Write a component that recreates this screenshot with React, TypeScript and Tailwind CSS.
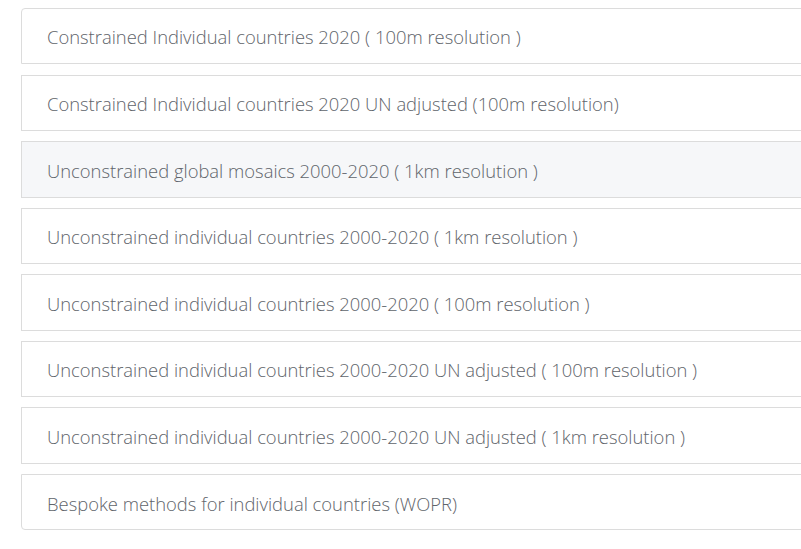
import React from "react";

const items = [
  "Constrained Individual countries 2020 ( 100m resolution )",
  "Constrained Individual countries 2020 UN adjusted (100m resolution)",
  "Unconstrained global mosaics 2000-2020 ( 1km resolution )",
  "Unconstrained individual countries 2000-2020 ( 1km resolution )",
  "Unconstrained individual countries 2000-2020 ( 100m resolution )",
  "Unconstrained individual countries 2000-2020 UN adjusted ( 100m resolution )",
  "Unconstrained individual countries 2000-2020 UN adjusted ( 1km resolution )",
  "Bespoke methods for individual countries (WOPR)",
];

export default function App() {
  return (
    <div className="w-[801px] h-[549px] overflow-hidden bg-white pt-[8px] pl-[21px]" style={{ fontFamily: '"Open Sans", "Noto Sans", sans-serif' }}>
      <div className="flex flex-col gap-[10.2px] w-[820px]">
        {items.map((t, i) => (
          <div
            key={i}
            className={`h-[56.4px] flex items-center pl-[25px] border border-[#dcdcdc] text-[18.4px] font-light text-[#5f656b] ${i === 2 ? "bg-[#f6f7f9]" : "bg-white"} ${i === 0 ? "rounded-t-[4px]" : ""} ${i === items.length - 1 ? "rounded-b-[4px]" : ""}`}
          >
            <span className="leading-none pt-[3px]">{t}</span>
          </div>
        ))}
      </div>
    </div>
  );
}
